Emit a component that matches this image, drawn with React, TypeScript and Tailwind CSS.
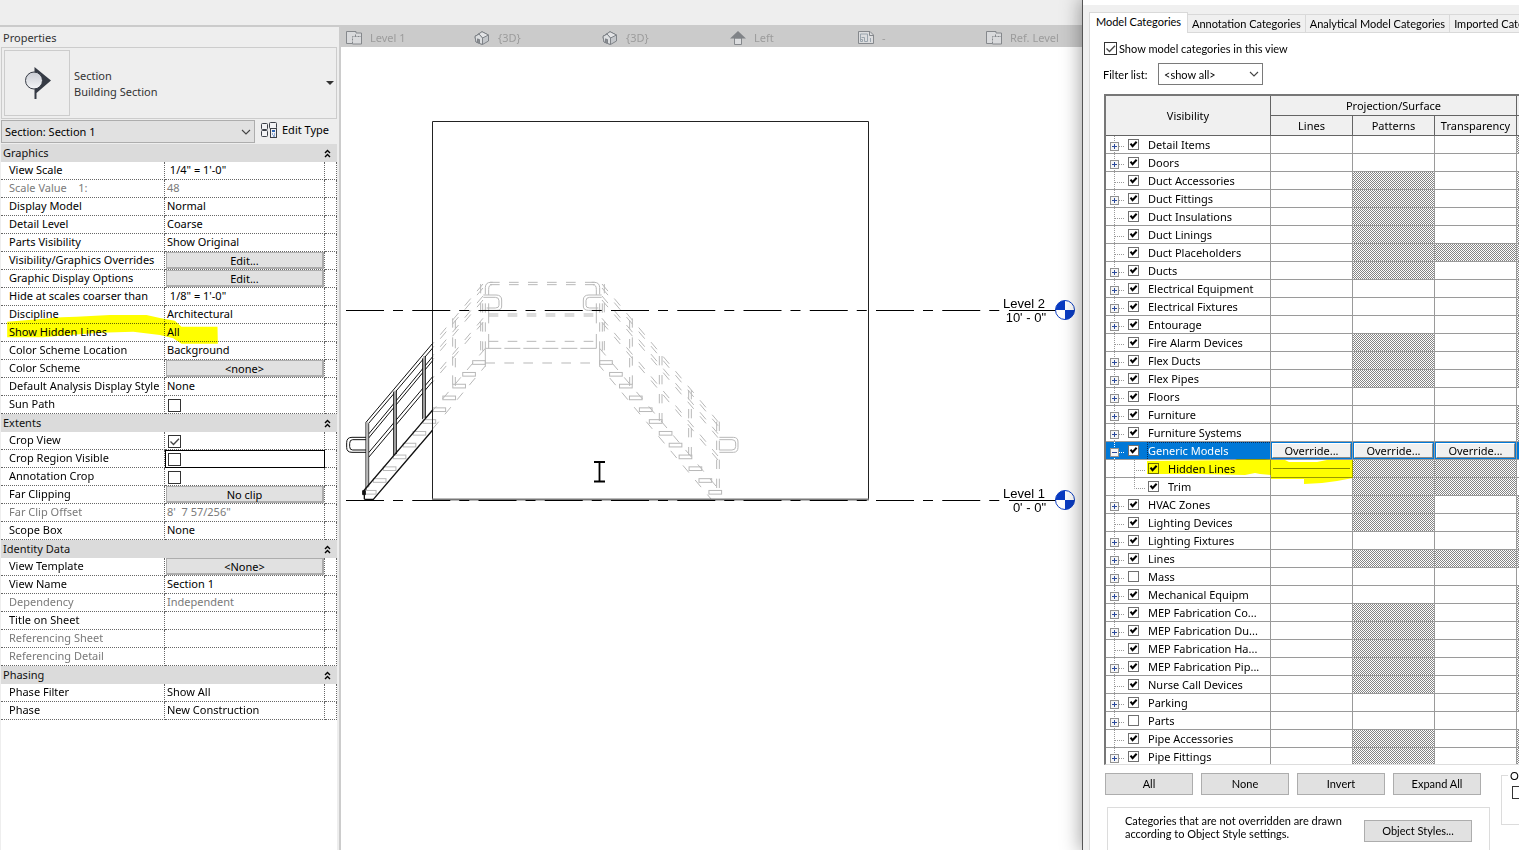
import type { ReactNode } from 'react'
import clsx from 'clsx'

type Prop = {
  name: string
  value?: string
  kind?: 'text' | 'button' | 'check'
  checked?: boolean
  muted?: boolean
  focused?: boolean
  marked?: boolean
}

const PROPERTY_GROUPS: { title: string; props: Prop[] }[] = [
  {
    title: 'Graphics',
    props: [
      { name: 'View Scale', value: ' 1/4" = 1\'-0"' },
      { name: 'Scale Value    1:', value: '48', muted: true },
      { name: 'Display Model', value: 'Normal' },
      { name: 'Detail Level', value: 'Coarse' },
      { name: 'Parts Visibility', value: 'Show Original' },
      { name: 'Visibility/Graphics Overrides', value: 'Edit...', kind: 'button' },
      { name: 'Graphic Display Options', value: 'Edit...', kind: 'button' },
      { name: 'Hide at scales coarser than', value: ' 1/8" = 1\'-0"' },
      { name: 'Discipline', value: 'Architectural' },
      { name: 'Show Hidden Lines', value: 'All', marked: true },
      { name: 'Color Scheme Location', value: 'Background' },
      { name: 'Color Scheme', value: '<none>', kind: 'button' },
      { name: 'Default Analysis Display Style', value: 'None' },
      { name: 'Sun Path', kind: 'check' },
    ],
  },
  {
    title: 'Extents',
    props: [
      { name: 'Crop View', kind: 'check', checked: true },
      { name: 'Crop Region Visible', kind: 'check', focused: true },
      { name: 'Annotation Crop', kind: 'check' },
      { name: 'Far Clipping', value: 'No clip', kind: 'button' },
      { name: 'Far Clip Offset', value: "8'  7 57/256\"", muted: true },
      { name: 'Scope Box', value: 'None' },
    ],
  },
  {
    title: 'Identity Data',
    props: [
      { name: 'View Template', value: '<None>', kind: 'button' },
      { name: 'View Name', value: 'Section 1' },
      { name: 'Dependency', value: 'Independent', muted: true },
      { name: 'Title on Sheet' },
      { name: 'Referencing Sheet', muted: true },
      { name: 'Referencing Detail', muted: true },
    ],
  },
  {
    title: 'Phasing',
    props: [
      { name: 'Phase Filter', value: 'Show All' },
      { name: 'Phase', value: 'New Construction' },
    ],
  },
]

// off lists the cells that cannot be overridden: P patterns, T transparency, C cut
type Category = {
  name: string
  leaf?: boolean
  child?: boolean
  last?: boolean
  selected?: boolean
  unchecked?: boolean
  off?: string
}

const CATEGORIES: Category[] = [
  { name: 'Detail Items', off: 'C' },
  { name: 'Doors' },
  { name: 'Duct Accessories', leaf: true, off: 'PC' },
  { name: 'Duct Fittings', off: 'PC' },
  { name: 'Duct Insulations', leaf: true, off: 'PC' },
  { name: 'Duct Linings', leaf: true, off: 'PC' },
  { name: 'Duct Placeholders', leaf: true, off: 'PTC' },
  { name: 'Ducts', off: 'PC' },
  { name: 'Electrical Equipment', off: 'C' },
  { name: 'Electrical Fixtures', off: 'C' },
  { name: 'Entourage', off: 'C' },
  { name: 'Fire Alarm Devices', leaf: true, off: 'PC' },
  { name: 'Flex Ducts', off: 'PC' },
  { name: 'Flex Pipes', off: 'PC' },
  { name: 'Floors' },
  { name: 'Furniture', off: 'C' },
  { name: 'Furniture Systems', off: 'C' },
  { name: 'Generic Models', selected: true },
  { name: 'Hidden Lines', child: true, off: 'PT' },
  { name: 'Trim', child: true, last: true, off: 'PT' },
  { name: 'HVAC Zones', off: 'PC' },
  { name: 'Lighting Devices', leaf: true, off: 'PC' },
  { name: 'Lighting Fixtures', off: 'C' },
  { name: 'Lines', off: 'PTC' },
  { name: 'Mass', unchecked: true },
  { name: 'Mechanical Equipm', off: 'C' },
  { name: 'MEP Fabrication Co...', off: 'PC' },
  { name: 'MEP Fabrication Du...', off: 'PC' },
  { name: 'MEP Fabrication Ha...', leaf: true, off: 'PC' },
  { name: 'MEP Fabrication Pip...', off: 'PC' },
  { name: 'Nurse Call Devices', leaf: true, off: 'PC' },
  { name: 'Parking', off: 'C' },
  { name: 'Parts', unchecked: true },
  { name: 'Pipe Accessories', leaf: true, off: 'PC' },
  { name: 'Pipe Fittings', off: 'PC' },
]

const VIEW_TABS = [
  { label: 'Level 1', icon: 'plan' },
  { label: '{3D}', icon: 'cube' },
  { label: '{3D}', icon: 'cube' },
  { label: 'Left', icon: 'elevation' },
  { label: '-', icon: 'sheet' },
  { label: 'Ref. Level', icon: 'plan' },
]

const HATCH =
  'bg-[conic-gradient(#858585_25%,#ffffff_0_50%,#858585_0_75%,#ffffff_0)] bg-[length:2px_2px]'

function Chevron({ className }: { className?: string }) {
  return (
    <svg viewBox="0 0 10 6" className={clsx('pointer-events-none h-1.5 w-2.5', className)}>
      <path d="M1 1l4 4 4-4" fill="none" stroke="#444" strokeWidth="1.1" />
    </svg>
  )
}

function CheckBox({ label, checked, small }: { label?: string; checked?: boolean; small?: boolean }) {
  return (
    <span className={clsx('relative block shrink-0', small ? 'size-[11px]' : 'size-[13px]')}>
      <input
        type="checkbox"
        aria-label={label}
        defaultChecked={checked}
        className={clsx(
          'peer block size-full appearance-none border bg-white',
          small ? 'border-[#707070]' : 'border-[#333333]',
        )}
      />
      <svg
        viewBox="0 0 13 13"
        className="pointer-events-none absolute inset-0 hidden size-full peer-checked:block"
      >
        <path
          d={small ? 'M3 5.5l2.4 3L10.2 3.2' : 'M2.5 6.5l3 3L11 3.8'}
          fill="none"
          stroke={small ? '#000' : '#444'}
          strokeWidth={small ? 2.4 : 1.3}
        />
      </svg>
    </span>
  )
}

function TabIcon({ kind }: { kind: string }) {
  return (
    <svg viewBox="0 0 16 14" className="h-3.5 w-4 shrink-0">
      {kind === 'plan' && (
        <g fill="#d9dadc" stroke="#85888c">
          <path d="M.5.5h9.500v1.500h5.500v11h-9v-.5h-6z" />
          <path d="M6.500 12.500V5.500h9M9.500 5.500V2.500" fill="none" strokeDasharray="2 1" />
        </g>
      )}
      {kind === 'cube' && (
        <g stroke="#7f8388" strokeLinejoin="round">
          <path d="M1 5.500L8 .7l6.500 3.300v6L8.500 13.500 2 11z" fill="#c3c6ca" />
          <path d="M1 5.500L8 .7l6.500 3.300L8.500 7 5 3z" fill="#e2e3e5" />
          <path d="M5 3L1 5.500 2 11l1.500.6V8l2 .8v3.600l3 1.100V7z" fill="#dcdee0" />
          <path d="M3.500 8l2 .8v3.600l-2-.8z" fill="#8a8d91" />
        </g>
      )}
      {kind === 'elevation' && (
        <>
          <path d="M4.500 7h7v6.500h-7z" fill="#dcdddf" stroke="#85888c" />
          <path d="M8 0l8 7.500H0z" fill="#808387" />
        </>
      )}
      {kind === 'sheet' && (
        <g fill="none" stroke="#85888c">
          <path d="M.5.5H12l3.500 3.500v8.500H.5z" fill="#dcdddf" />
          <path d="M11.500.5v4h4" />
          <path d="M2.500 10.500v-7.500h7v7.500h-3V6.500h-3M2.500 10.500h2v-2h-2M12.500 11V7" stroke="#9aa4ad" />
        </g>
      )}
    </svg>
  )
}

function CollapseIcon() {
  return (
    <svg viewBox="0 0 7 9" className="h-[9px] w-[7px]">
      <path d="M1 4l2.500-2.500L6 4M1 8l2.500-2.500L6 8" fill="none" stroke="#000" strokeWidth="1.400" />
    </svg>
  )
}

function PropertyRow({ prop }: { prop: Prop }) {
  return (
    <tr className={clsx('align-top', prop.muted ? 'text-[#7a7a7a]' : 'text-black')}>
      <th
        scope="row"
        className="relative h-[18px] border-r border-b border-dotted border-[#666666] p-0 pl-2 text-left font-normal whitespace-pre"
      >
        {prop.marked && (
          <svg
            viewBox="22 345 632 87"
            className="pointer-events-none absolute -top-[9px] left-1.5 h-[29px] w-[211px] mix-blend-multiply"
          >
            <path
              d="M22 365L185 352 230 350 330 345H440L480 354 525 362 545 380H653L654 431H545L520 415 480 405 400 395 300 398 200 406 130 412H22z"
              fill="#ffff00"
            />
          </svg>
        )}
        {prop.name}
      </th>
      <td
        className={clsx(
          'border-r border-b border-dotted border-[#666666] p-0 whitespace-pre',
          prop.focused && 'outline -outline-offset-1 outline-black',
        )}
      >
        {prop.kind === 'button' && (
          <button className="ml-px block h-[17px] w-[158px] border border-r-2 border-b-2 border-[#adadad] bg-[#e1e1e1] leading-4 text-black">
            {prop.value}
          </button>
        )}
        {prop.kind === 'check' && (
          <span className="block pt-[3px] pl-[3px]">
            <CheckBox label={prop.name} checked={prop.checked} />
          </span>
        )}
        {!prop.kind && <span className="block pl-0.5">{prop.value}</span>}
      </td>
      <td className="border-r border-b border-dotted border-[#666666] p-0" />
    </tr>
  )
}

function PropertiesPanel() {
  return (
    <aside className="w-[339px] shrink-0 bg-[#eeeeee] pr-0.5 pl-px font-['Noto_Sans','Open_Sans',sans-serif] text-[11px] leading-4 text-[#333333]">
      <h2 className="h-5 pl-0.5 leading-[22px]">Properties</h2>
      <div className="flex h-[72px] items-center border border-[#cccccc] pl-0.5">
        <div className="flex size-[66px] shrink-0 items-center justify-center border border-[#cccccc]">
          <svg viewBox="0 0 26 32" className="ml-0.5 h-8 w-[26px]">
            <defs>
              <linearGradient id="ball" x1="0" y1="0" x2="0" y2="1">
                <stop offset="0" stopColor="#c9ccd3" />
                <stop offset="1" stopColor="#f4f5f7" />
              </linearGradient>
            </defs>
            <path d="M9.500 0L26 13.500 11.500 26V32h-2z" fill="#363b45" />
            <circle cx="9" cy="13.500" r="8.500" fill="url(#ball)" stroke="#363b45" />
          </svg>
        </div>
        <p className="grow pt-0.5 pl-1">
          Section
          <br />
          Building Section
        </p>
        <button aria-label="Change type" className="mr-0.5">
          <svg viewBox="0 0 8 4" className="h-1 w-2">
            <path d="M0 0h8L4 4z" fill="#333" />
          </svg>
        </button>
      </div>
      <div className="flex h-[25px] items-start pt-px">
        <div className="relative">
          <select
            aria-label="Instance"
            className="block h-[23px] w-[254px] appearance-none border border-[#adadad] bg-[#e1e1e1] pl-[3px] text-black"
          >
            <option>Section: Section 1</option>
          </select>
          <Chevron className="absolute top-[9px] right-1" />
        </div>
        <button className="flex items-center gap-1 pt-0.5 pl-1.5 text-black">
          <svg viewBox="0 0 17 16" className="h-4 w-[17px]">
            <g fill="#f2f2f4" stroke="#3c4048">
              <rect x=".5" y="1.500" width="6" height="6" rx="1" />
              <rect x="8.500" y=".5" width="7" height="6" rx="1" />
              <rect x=".5" y="8.500" width="6" height="6" rx="1" />
              <rect x="9.500" y="6.500" width="6" height="9" />
            </g>
            <path d="M11 8h3v2h-3z" fill="#2f66b5" />
            <path d="M11 12h1M13 12h1M12 14h2" stroke="#2f66b5" />
          </svg>
          Edit Type
        </button>
      </div>
      <table className="w-full table-fixed border-separate border-spacing-0 bg-white">
        <colgroup>
          <col className="w-[164px]" />
          <col />
          <col className="w-3" />
        </colgroup>
        {PROPERTY_GROUPS.map((group) => (
          <tbody key={group.title}>
            <tr className="bg-[#dbdbdb] text-[#111111]">
              <th colSpan={3} className="h-[18px] p-0 pl-0.5 font-normal">
                <span className="flex items-center justify-between pr-1.5">
                  {group.title}
                  <button aria-label={`Collapse ${group.title}`}>
                    <CollapseIcon />
                  </button>
                </span>
              </th>
            </tr>
            {group.props.map((prop) => (
              <PropertyRow key={prop.name} prop={prop} />
            ))}
          </tbody>
        ))}
      </table>
      <div className="h-full bg-white" />
    </aside>
  )
}

function LevelHead({ y, name, elevation }: { y: number; name: string; elevation: string }) {
  return (
    <g>
      <path d={`M346 ${y}H1000`} stroke="#000" strokeDasharray="38 9 10 9.250" />
      <path d={`M1009 ${y}h46`} stroke="#000" />
      <text x="1045" y={y - 2.5} textAnchor="end">
        {name}
      </text>
      <text x="1046" y={y + 11.5} textAnchor="end">
        {elevation}
      </text>
      <circle cx="1065" cy={y - 0.5} r="9.500" fill="#fff" stroke="#0a3cc2" />
      <path
        d={`M1065 ${y - 0.5}v-9.500a9.500 9.500 0 0 0-9.500 9.500zM1065 ${y - 0.5}v9.500a9.500 9.500 0 0 0 9.500-9.500z`}
        fill="#0a3cc2"
      />
    </g>
  )
}

const RAIL_OFFSETS = [0, 12, 36, 48, 103, 115]

function HiddenFlight() {
  return (
    <g strokeDasharray="28 29">
      {RAIL_OFFSETS.map((dy) => (
        <path key={dy} d={`M786 ${72 + dy}L1134 ${485 + dy}`} />
      ))}
      <path d="M779 265L1138 690" />
      <path d="M779 318L1114 718" strokeDashoffset="10" />
      <path d="M779 130V265M787 130V275M793 72V275M869 180V378M877 175V380M958 288V483M966 288V486M1046 390V585M1054 390V588M1130 485V700M1138 485V700" />
    </g>
  )
}

function Treads() {
  return (
    <>
      {Array.from({ length: 12 }, (_, i) => (
        <rect key={i} x={779 + i * 29.8} y={302 + i * 35.4} width="38" height="11" />
      ))}
    </>
  )
}

function SectionView() {
  return (
    <svg
      viewBox="341 47 741 803"
      preserveAspectRatio="xMinYMin meet"
      className="block h-[803px] w-full font-['Liberation_Sans',Arial,sans-serif] text-[13px]"
    >
      {/* hidden stair, drawn at three times the sheet scale */}
      <g transform="translate(340 260) scale(.33333)" fill="none" stroke="#b8b8b8" strokeWidth="3">
        <clipPath id="behind">
          <path d="M278 0h700v760H278z" />
        </clipPath>
        <HiddenFlight />
        <Treads />
        <g clipPath="url(#behind)">
          <g transform="translate(1215 0) scale(-1 1)">
            <HiddenFlight />
          </g>
        </g>
        <g transform="translate(1215 0) scale(-1 1)">
          <Treads />
        </g>
        <path d="M436 103V82Q437 67 452 67H458M446 105V88Q446 74 456 74M779 103V82Q778 67 763 67H755M769 105V88Q769 74 759 74" />
        <path d="M450 67H765M450 74H765M446 162H769M446 168H769M446 244H769M436 309H779" strokeDasharray="29 28" />
        <path d="M436 265H779" strokeDasharray="48 9" />
        <path d="M430 105H468Q485 105 485 120V138Q485 151 470 151H430M430 112H466Q477 112 477 122V136Q477 144 466 144H440" />
        <path d="M785 105H747Q730 105 730 120V138Q730 151 745 151H785M785 112H749Q738 112 738 122V136Q738 144 749 144H775" />
        <path d="M436 265V320M446 222V265M446 130V190M779 265V320M769 222V265M769 130V190" />
        <path d="M1138 532H1180Q1194 532 1194 546V562Q1194 577 1180 577H1138M1138 539H1176Q1187 539 1187 549V560Q1187 570 1176 570H1138" />
      </g>

      <path d="M432.500 499.500V121.500H868.500V500" fill="none" stroke="#222" />
      <path d="M432 499.500H869" stroke="#777" strokeWidth="2" />

      {/* cut flight in front of the wall */}
      <g transform="translate(340 260) scale(.33333)" fill="none" stroke="#111" strokeWidth="3">
        <path d="M78 690V487L278 250M86 490L278 264M86 522L278 290M86 534L278 302M86 578L278 350M86 592L278 364M86 490V680" />
        <path d="M82 487V684M165 392V585M252 288V474" stroke="#bbb" strokeWidth="6" />
        <path d="M161 395V585M169 392V582M248 295V477M256 288V474" />
        <path d="M73 718V690L278 450M73 718H100L278 510" strokeWidth="4" />
        <path d="M68 692h8v12h-8z" fill="#111" />
        <path d="M78 532H36Q20 532 20 548V562Q20 577 36 577H78M78 539H38Q29 539 29 550V560Q29 570 38 570H78" />
      </g>

      <LevelHead y={310.5} name="Level 2" elevation={'10\' - 0"'} />
      <LevelHead y={500.5} name="Level 1" elevation={'0\' - 0"'} />

      <path d="M594 462h11M594 481.500h11M599.500 462v19.500" stroke="#000" strokeWidth="1.800" />
    </svg>
  )
}

function DrawingArea() {
  return (
    <main className="min-w-0 grow overflow-hidden border-l-2 border-[#cccccc] bg-white">
      <nav className="flex h-5 bg-[#cbcbcb] font-['Noto_Sans','Open_Sans',sans-serif] text-[11px] leading-4 text-[#9c9c9c]">
        {VIEW_TABS.map((tab, i) => (
          <button key={i} className="flex w-32 shrink-0 items-center gap-2 pt-px pl-[5px] whitespace-nowrap">
            <TabIcon kind={tab.icon} />
            {tab.label}
          </button>
        ))}
      </nav>
      <SectionView />
    </main>
  )
}

function TreeCell({ cat }: { cat: Category }) {
  const line = cat.selected ? '#fff' : '#999'
  return (
    <div className={clsx('relative flex h-[17px] items-center', cat.selected && 'bg-[#0078d7] text-white')}>
      <svg
        viewBox="0 0 44 18"
        className={clsx('h-[18px] shrink-0', cat.child ? 'w-11' : 'w-6')}
        preserveAspectRatio="xMinYMin slice"
      >
        <path d="M8.500 0V18" stroke={line} strokeDasharray="1 1" />
        {cat.child ? (
          <path d={cat.last ? 'M28.500 0V10.500H39' : 'M28.500 0V18M28 10.500H39'} fill="none" stroke="#999" strokeDasharray="1 1" />
        ) : (
          <path d="M9 10.500H19" stroke={line} strokeDasharray="1 1" />
        )}
      </svg>
      {!cat.leaf && !cat.child && (
        <button
          aria-label={`Toggle ${cat.name}`}
          className="absolute top-1.5 left-1 size-[9px] border border-[#919191] bg-[#f6f6f6]"
        >
          <svg viewBox="0 0 7 7" className="block size-[7px]">
            <path d={cat.selected ? 'M1 3.500h5' : 'M1 3.500h5M3.500 1v5'} stroke="#2b4a9b" />
          </svg>
        </button>
      )}
      <span className="relative -ml-0.5 flex items-center gap-[9px]">
        <CheckBox small label={cat.name} checked={!cat.unchecked} />
        <span className="whitespace-nowrap">{cat.name}</span>
      </span>
      {cat.selected && (
        <span className="pointer-events-none absolute inset-y-0 right-0 left-[41px] border-t border-l border-dotted border-[#0a2a55]" />
      )}
    </div>
  )
}

function GridCell({ cat, off }: { cat: Category; off: string }) {
  const disabled = cat.off?.includes(off)
  return (
    <td
      className={clsx(
        'border-r border-b border-[#9a9a9a] p-0',
        cat.selected && 'bg-[#0078d7]',
        disabled && HATCH,
      )}
    >
      {cat.selected && off !== 'C' && (
        <button className="mx-auto block h-[15px] w-[79px] border border-t-white border-r-[#888888] border-b-[#888888] border-l-white bg-[#f0f0f0] leading-3">
          Override...
        </button>
      )}
      {cat.name === 'Hidden Lines' && off === 'L' && <span className="mx-0.5 block border-t border-[#888888]" />}
    </td>
  )
}

function HeadCell({ children, rows, cols }: { children?: ReactNode; rows?: number; cols?: number }) {
  return (
    <th
      rowSpan={rows}
      colSpan={cols}
      className="h-5 border-r border-b border-[#646464] bg-[#f0f0f0] p-0 font-normal whitespace-nowrap"
    >
      {children}
    </th>
  )
}

function CategoryTable() {
  return (
    <div className="mt-[9px] ml-3.5 min-h-0 grow overflow-hidden border-t-2 border-b border-l-2 border-[#777777] border-b-[#dddddd] font-['Noto_Sans','Open_Sans',sans-serif] text-[11px] leading-4">
      <table className="w-[511px] table-fixed border-separate border-spacing-0">
        <colgroup>
          <col className="w-[165px]" />
          <col className="w-[82px]" />
          <col className="w-[82px]" />
          <col className="w-[82px]" />
          <col />
        </colgroup>
        <thead>
          <tr>
            <HeadCell rows={2}>Visibility</HeadCell>
            <HeadCell cols={3}>Projection/Surface</HeadCell>
            <HeadCell />
          </tr>
          <tr>
            <HeadCell>Lines</HeadCell>
            <HeadCell>Patterns</HeadCell>
            <HeadCell>Transparency</HeadCell>
            <HeadCell />
          </tr>
        </thead>
        <tbody>
          {CATEGORIES.map((cat) => (
            <tr key={cat.name}>
              <td className="relative border-r border-b border-[#9a9a9a] p-0">
                <TreeCell cat={cat} />
                {cat.name === 'Hidden Lines' && (
                  <svg
                    viewBox="0 0 206 28"
                    className="pointer-events-none absolute -top-0.5 left-[41px] z-10 h-7 w-[206px] mix-blend-multiply"
                  >
                    <path
                      d="M0 3L88 2 90 1H118L128 2H138L142 4 170 4 180 2H206V20L190 23 175 25 157 26V21H124V17L113 16 108 15 98 17 55 16 0 16z"
                      fill="#ffff00"
                    />
                  </svg>
                )}
              </td>
              <GridCell cat={cat} off="L" />
              <GridCell cat={cat} off="P" />
              <GridCell cat={cat} off="T" />
              <GridCell cat={cat} off="C" />
            </tr>
          ))}
        </tbody>
      </table>
    </div>
  )
}

function PushButton({ children, wide }: { children: string; wide?: boolean }) {
  return (
    <button
      className={clsx('h-[22px] shrink-0 border border-[#adadad] bg-[#e1e1e1] pb-0.5', wide ? 'w-[108px]' : 'w-[88px]')}
    >
      {children}
    </button>
  )
}

function VisibilityDialog() {
  const tabs = ['Annotation Categories', 'Analytical Model Categories', 'Imported Categories']
  return (
    <section className="z-10 flex h-full w-[437px] shrink-0 flex-col overflow-hidden border-l border-[#555555] bg-[#f0f0f0] font-[Lato,'Noto_Sans',sans-serif] text-[11px] leading-[13px] text-black shadow-[0_0_18px_2px_rgba(0,0,0,0.35)]">
      <div className="h-[5px] shrink-0 bg-white" />
      <div className="mt-[7px] ml-1.5 flex h-5 shrink-0 items-end whitespace-nowrap">
        <button className="z-10 -mb-px h-[21px] w-[99px] shrink-0 border border-b-0 border-[#d9d9d9] bg-white pb-1">
          Model Categories
        </button>
        {tabs.map((tab) => (
          <button key={tab} className="h-[18px] shrink-0 border-t border-r border-[#d9d9d9] px-1">
            {tab}
          </button>
        ))}
      </div>
      <div className="ml-1.5 flex min-h-0 grow flex-col border-t border-l border-[#d9d9d9] bg-white">
        <label className="mt-[9px] ml-3.5 flex items-center gap-0.5">
          <CheckBox checked />
          Show model categories in this view
        </label>
        <div className="mt-2 ml-[13px] flex items-center">
          <label htmlFor="filter" className="w-[55px]">
            Filter list:
          </label>
          <div className="relative">
            <select
              id="filter"
              className="block h-[22px] w-[105px] appearance-none border border-[#7a7a7a] bg-white pl-[5px]"
            >
              <option>&lt;show all&gt;</option>
            </select>
            <Chevron className="absolute top-2 right-1" />
          </div>
        </div>
        <CategoryTable />
        <div className="flex h-[85px] shrink-0">
          <div className="w-[400px] shrink-0">
            <div className="mt-2 ml-[15px] flex gap-2">
              <PushButton>All</PushButton>
              <PushButton>None</PushButton>
              <PushButton>Invert</PushButton>
              <PushButton>Expand All</PushButton>
            </div>
            <div className="mt-3 ml-[17px] flex h-20 w-[383px] items-start justify-between border border-[#dcdcdc] pt-1.5 pr-[17px] pl-[17px]">
              <p>
                Categories that are not overridden are drawn
                <br />
                according to Object Style settings.
              </p>
              <div className="pt-1.5">
                <PushButton wide>Object Styles...</PushButton>
              </div>
            </div>
          </div>
          <fieldset className="mt-1 ml-[11px] h-[56px] w-40 shrink-0 border border-[#dcdcdc] pl-2.5">
            <legend className="-ml-1 px-0.5 whitespace-nowrap">Override Host Layers</legend>
            <label className="mt-1 flex items-center gap-1">
              <CheckBox />
              Cut Line Styles
            </label>
          </fieldset>
        </div>
      </div>
    </section>
  )
}

export default function App() {
  return (
    <div className="flex h-screen overflow-hidden">
      <div className="flex min-w-0 grow flex-col">
        <header className="h-[25px] shrink-0 bg-[#eeeeee]" />
        <div className="h-0.5 shrink-0 bg-[#cbcbcb]" />
        <div className="flex min-h-0 grow">
          <PropertiesPanel />
          <DrawingArea />
        </div>
      </div>
      <VisibilityDialog />
    </div>
  )
}
